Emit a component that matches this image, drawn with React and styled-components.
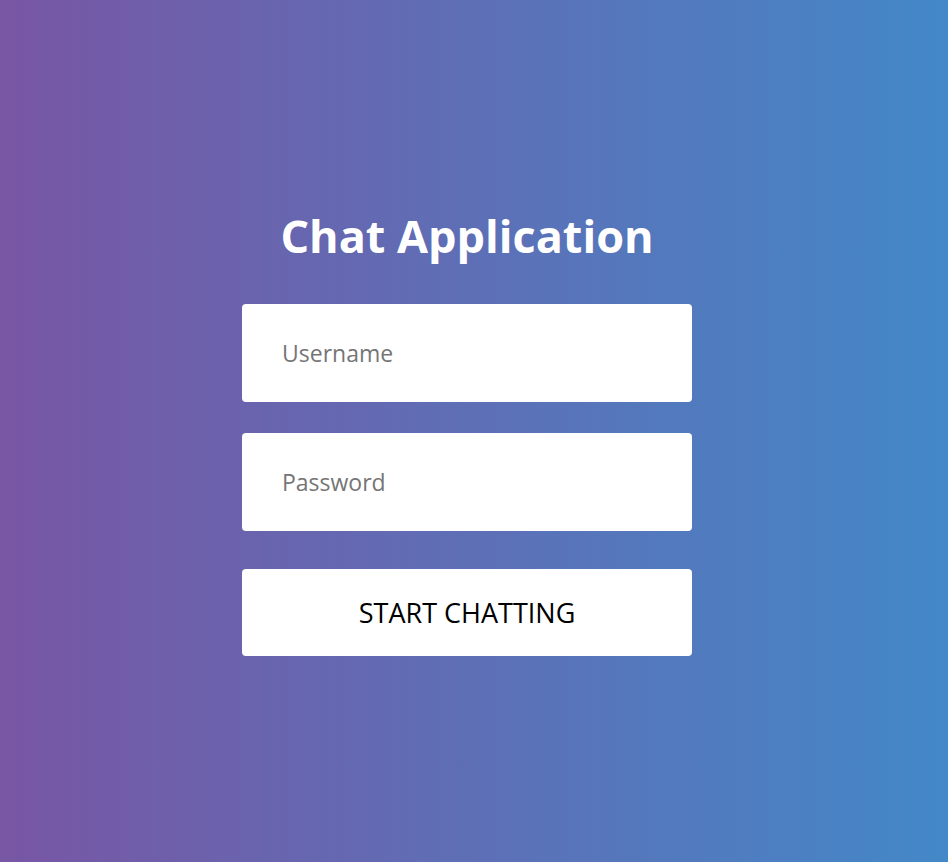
import React, { useState } from 'react'
import styled, { createGlobalStyle } from 'styled-components'

const GlobalStyle = createGlobalStyle`
  html, body {
    margin: 0;
    padding: 0;
    height: 100%;
  }
  body {
    font-family: 'Open Sans', 'Noto Sans', sans-serif;
  }
  #root {
    height: 100%;
  }
`

// full screen gradient, form sits in the middle
const Page = styled.div`
  box-sizing: border-box;
  width: 100%;
  height: 862px;
  padding: 0 14px 0 0;
  display: flex;
  align-items: center;
  justify-content: center;
  background: linear-gradient(to right, #7856a4, #4388c8);
`

const LoginForm = styled.form`
  width: 450px;
  display: flex;
  flex-direction: column;
  align-items: stretch;
`

const Title = styled.h1`
  margin: 0 0 38px;
  text-align: center;
  color: #fff;
  font-size: 45px;
  font-weight: 700;
  line-height: 60px;
`

const Input = styled.input`
  box-sizing: border-box;
  height: 98px;
  width: 100%;
  margin-bottom: ${(p) => p.gap || 31}px;
  padding: 0 40px;
  border: none;
  border-radius: 4px;
  background: #fff;
  font-family: inherit;
  font-size: 23px;
  color: #333;
  outline: none;

  &::placeholder {
    color: #757575;
  }
`

const SubmitButton = styled.button`
  height: 87px;
  width: 100%;
  border: none;
  border-radius: 4px;
  background: #fff;
  color: #000;
  font-family: inherit;
  font-size: 27px;
  cursor: pointer;
`

function App() {
  const [username, setUsername] = useState('')
  const [password, setPassword] = useState('')

  return (
    <>
      <GlobalStyle />
      <Page>
        <LoginForm onSubmit={(e) => e.preventDefault()}>
          <Title>Chat Application</Title>
          <Input
            type="text"
            placeholder="Username"
            value={username}
            onChange={(e) => setUsername(e.target.value)}
          />
          <Input
            type="password"
            placeholder="Password"
            gap={38}
            value={password}
            onChange={(e) => setPassword(e.target.value)}
          />
          <SubmitButton type="submit">START CHATTING</SubmitButton>
        </LoginForm>
      </Page>
    </>
  )
}

export default App
